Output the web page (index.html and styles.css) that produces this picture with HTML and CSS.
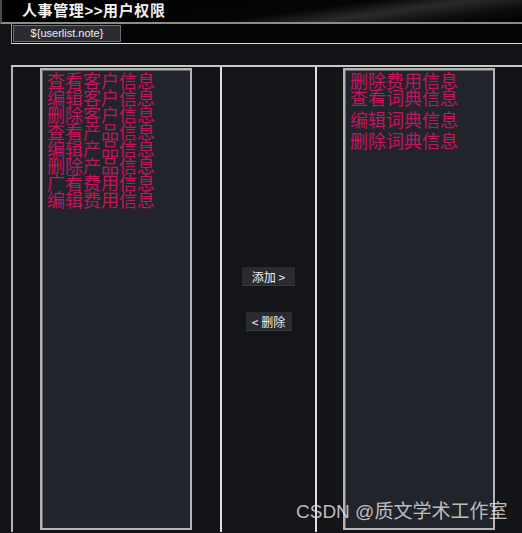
FILE: index.html
```html
<!DOCTYPE html>
<html lang="zh">
<head>
<meta charset="utf-8">
<title>人事管理 用户权限</title>
<link rel="stylesheet" href="styles.css">
</head>
<body>
<div class="page">
  <div class="header"><span class="title">人事管理&gt;&gt;用户权限</span></div>
  <div class="tabbar"><div class="tab">${userlist.note}</div></div>
  <div class="main">
    <div class="listbox left">
      <div class="item">查看客户信息</div>
      <div class="item">编辑客户信息</div>
      <div class="item">删除客户信息</div>
      <div class="item">查看产品信息</div>
      <div class="item">编辑产品信息</div>
      <div class="item">删除产品信息</div>
      <div class="item">广看费用信息</div>
      <div class="item">编辑费用信息</div>
    </div>
    <div class="divider"></div>
    <div class="middle">
      <div class="btn add">添加 &gt;</div>
      <div class="btn del">&lt; 删除</div>
    </div>
    <div class="divider"></div>
    <div class="listbox right">
      <div class="item">删除费用信息</div>
      <div class="item">查看词典信息</div>
      <div class="item i3">编辑词典信息</div>
      <div class="item i4">删除词典信息</div>
    </div>
  </div>
  <div class="watermark">CSDN @质文学术工作室</div>
</div>
</body>
</html>
```
FILE: styles.css
```css
html, body {
  margin: 0;
  padding: 0;
  background: #121316;
}
body {
  font-family: "Noto Sans CJK SC", "Liberation Sans", sans-serif;
  width: 522px;
  height: 533px;
  overflow: hidden;
}
.page {
  position: relative;
  width: 522px;
  height: 533px;
  background: #121316;
}
.header {
  height: 24px;
  box-sizing: border-box;
  border-left: 2px solid #4a4a4a;
  border-bottom: 2px solid #8c8c8c;
  background: linear-gradient(172deg, #000 0%, #050505 55%, #2a2a2a 70%, #0c0c0c 85%, #000 100%);
  display: flex;
  align-items: center;
  padding-left: 20px;
}
.title {
  color: #f2f2f2;
  font-family: "Liberation Sans", "Noto Sans CJK SC", sans-serif;
  font-weight: bold;
  font-size: 15px;
  letter-spacing: 0.6px;
  line-height: 20px;
}
.tabbar {
  margin-left: 11px;
  height: 20px;
  box-sizing: border-box;
  border-left: 1px solid #9a9a9a;
  border-bottom: 1px solid #dcdcdc;
  background: #050505;
  display: flex;
  align-items: center;
  padding-left: 1px;
}
.tab {
  width: 108px;
  height: 17px;
  box-sizing: border-box;
  border: 1px solid #6e6e6e;
  background: #2b2c31;
  color: #f0f0f0;
  font-family: "Liberation Sans", sans-serif;
  font-size: 11px;
  line-height: 15px;
  text-align: center;
}
.main {
  margin-top: 21px;
  margin-left: 11px;
  height: 467px;
  box-sizing: border-box;
  border-top: 2px solid #c9c9c9;
  border-left: 2px solid #b5b5b5;
  display: flex;
  padding-left: 27px;
  background: #131417;
}
.listbox {
  width: 152px;
  box-sizing: border-box;
  margin: 1px 0 2px;
  border: 2px solid #b4b4b4;
  box-shadow: inset 1px 1px 0 #6a6a6a;
  background: #22242b;
  padding: 2px 0 0 5px;
}
.item {
  color: #c4145c;
  font-size: 18px;
  line-height: 17px;
  white-space: nowrap;
}
.right .i3 { margin-top: 5px; }
.right .i4 { margin-top: 4px; }
.left { margin-right: 28px; }
.right { margin-left: 26px; }
.divider {
  width: 2px;
  background: #e0e0e0;
}
.middle {
  width: 93px;
  display: flex;
  flex-direction: column;
  align-items: center;
  padding-top: 200px;
  background: #141518;
}
.btn {
  height: 19px;
  box-sizing: border-box;
  background: #2a2b2f;
  border-bottom: 1px solid #3a3a3a;
  color: #f0f0f0;
  font-size: 12px;
  line-height: 19px;
  text-align: center;
}
.add { width: 53px; }
.del { width: 46px; margin-top: 26px; }
.watermark {
  position: absolute;
  left: 296px;
  top: 500px;
  color: rgba(225, 225, 225, 0.82);
  font-family: "Liberation Sans", "Noto Sans CJK SC", sans-serif;
  font-size: 19px;
  line-height: 24px;
  white-space: nowrap;
}
```
